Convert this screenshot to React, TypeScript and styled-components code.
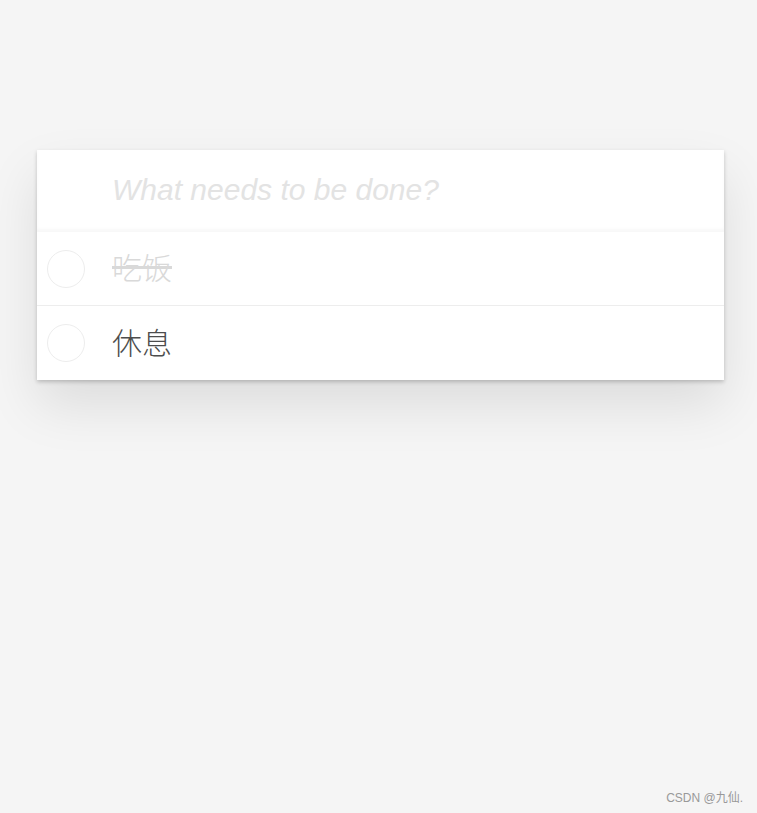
import React from "react";
import styled, { createGlobalStyle } from "styled-components";

const Global = createGlobalStyle`
  html, body { margin: 0; padding: 0; }
  body {
    background: #f5f5f5;
    font-family: "Liberation Sans", Arial, "Noto Sans CJK SC", sans-serif;
    min-height: 813px;
  }
`;

const Page = styled.div`
  min-height: 813px;
  display: flex;
  flex-direction: column;
`;

const Card = styled.section`
  margin: 150px 33px 0 37px;
  background: #fff;
  box-shadow: 0 2px 4px 0 rgba(0, 0, 0, 0.2), 0 25px 50px 0 rgba(0, 0, 0, 0.1);
`;

const NewTodo = styled.input`
  display: block;
  width: 100%;
  box-sizing: border-box;
  height: 82px;
  border: none;
  outline: none;
  padding: 0 16px 2px 75px;
  font-family: "Liberation Sans", Arial, sans-serif;
  font-size: 30px;
  color: #4d4d4d;
  background: transparent;
  box-shadow: inset 0 -3px 3px rgba(0, 0, 0, 0.03);
  &::placeholder {
    font-style: italic;
    color: #e3e3e3;
  }
`;

const List = styled.ul`
  list-style: none;
  margin: 0;
  padding: 0;
`;

const Item = styled.li<{ $last?: boolean }>`
  display: flex;
  align-items: center;
  height: ${(p) => (p.$last ? "74px" : "73px")};
  border-bottom: ${(p) => (p.$last ? "none" : "1px solid #ededed")};
`;

const Toggle = styled.span`
  flex: none;
  width: 36px;
  height: 36px;
  margin: 0 27px 0 10px;
  border: 1px solid #ededed;
  border-radius: 50%;
  box-sizing: content-box;
`;

const Label = styled.label<{ $done?: boolean }>`
  font-family: "Noto Sans CJK SC", "Liberation Sans", sans-serif;
  font-size: 30px;
  line-height: 1.2;
  margin-top: -5px;
  color: ${(p) => (p.$done ? "#d9d9d9" : "#4d4d4d")};
  text-decoration: ${(p) => (p.$done ? "line-through" : "none")};
  font-weight: 300;
`;

const Spacer = styled.div`
  flex: 1;
`;

const Watermark = styled.div`
  align-self: flex-end;
  margin: 0 14px 8px 0;
  font-size: 12px;
  color: #999;
  font-family: "Liberation Sans", Arial, "Noto Sans CJK SC", sans-serif;
`;

const todos = [
  { text: "吃饭", done: true },
  { text: "休息", done: false },
];

export default function App() {
  return (
    <Page>
      <Global />
      <Card>
        <NewTodo placeholder="What needs to be done?" />
        <List>
          {todos.map((t, i) => (
            <Item key={t.text} $last={i === todos.length - 1}>
              <Toggle />
              <Label $done={t.done}>{t.text}</Label>
            </Item>
          ))}
        </List>
      </Card>
      <Spacer />
      <Watermark>CSDN @九仙.</Watermark>
    </Page>
  );
}
